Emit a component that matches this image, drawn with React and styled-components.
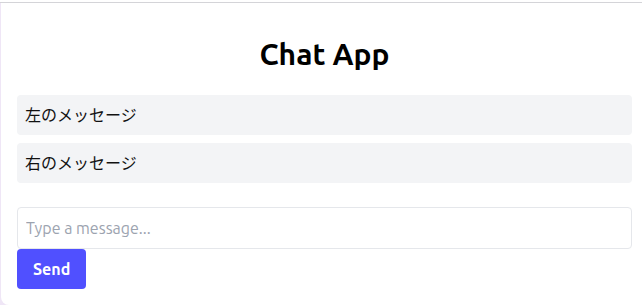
import React, { useState } from 'react'
import styled, { createGlobalStyle } from 'styled-components'

const GlobalStyle = createGlobalStyle`
  html, body {
    margin: 0;
    padding: 0;
    background: #ffffff;
  }
  body {
    font-family: 'Ubuntu', 'Noto Sans', 'Noto Sans CJK JP', sans-serif;
  }
  * {
    box-sizing: border-box;
  }
`

const TopBar = styled.div`
  height: 3px;
  border-bottom: 1px solid #d4d4d8;
`

const Page = styled.div`
  background: #efe6f6;
  padding: 0 0 2px 1px;
`

const Card = styled.div`
  background: #ffffff;
  border-radius: 0 0 0 8px;
  padding: 16px 10px 16px 16px;
  display: flex;
  flex-direction: column;
`

const Title = styled.h1`
  margin: 17px 0 23px;
  text-align: center;
  font-size: 30px;
  line-height: 36px;
  font-weight: 700;
  color: #000000;
`

const MessageList = styled.div`
  display: flex;
  flex-direction: column;
  gap: 8px;
  margin-bottom: 24px;
`

const Message = styled.div`
  background: #f3f4f6;
  border-radius: 4px;
  padding: 8px;
  font-size: 16px;
  line-height: 24px;
  color: #111111;
`

const Input = styled.input`
  width: 100%;
  border: 1px solid #e5e7eb;
  border-radius: 4px;
  padding: 8px;
  font-family: inherit;
  font-size: 16px;
  line-height: 24px;
  color: #111111;
  outline: none;
  &::placeholder {
    color: #9ca3af;
  }
`

const SendButton = styled.button`
  align-self: flex-start;
  background: #5050ff;
  color: #ffffff;
  border: none;
  border-radius: 4px;
  padding: 8px 16px;
  font-family: inherit;
  font-size: 16px;
  line-height: 24px;
  font-weight: 700;
  cursor: pointer;
`

const App = () => {
  const [messages] = useState(['左のメッセージ', '右のメッセージ'])
  const [text, setText] = useState('')

  return (
    <>
      <GlobalStyle />
      <TopBar />
      <Page>
        <Card>
          <Title>Chat App</Title>
          <MessageList>
            {messages.map((m, i) => (
              <Message key={i}>{m}</Message>
            ))}
          </MessageList>
          <Input
            placeholder="Type a message..."
            value={text}
            onChange={(e) => setText(e.target.value)}
          />
          <SendButton>Send</SendButton>
        </Card>
      </Page>
    </>
  )
}

export default App
